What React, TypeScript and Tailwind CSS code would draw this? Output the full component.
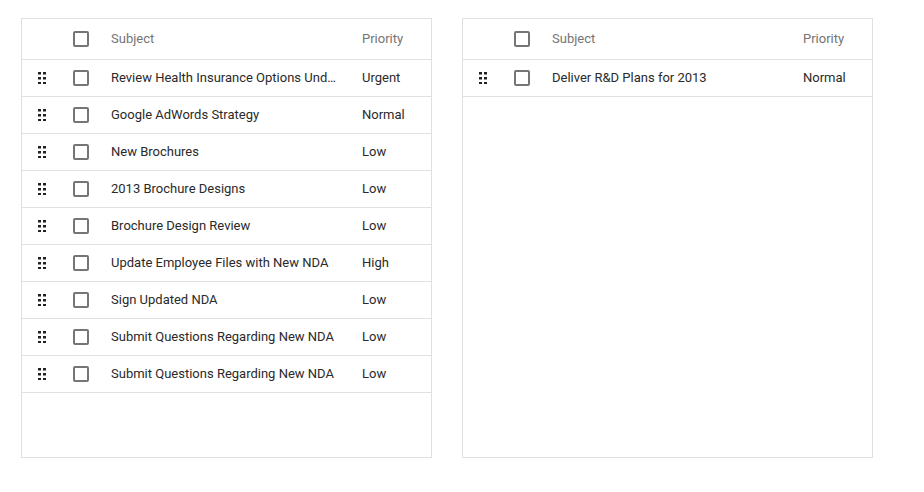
import React from 'react'

interface Task {
  subject: string
  priority: string
}

const leftTasks: Task[] = [
  { subject: 'Review Health Insurance Options Under the Affordable Care Act', priority: 'Urgent' },
  { subject: 'Google AdWords Strategy', priority: 'Normal' },
  { subject: 'New Brochures', priority: 'Low' },
  { subject: '2013 Brochure Designs', priority: 'Low' },
  { subject: 'Brochure Design Review', priority: 'Low' },
  { subject: 'Update Employee Files with New NDA', priority: 'High' },
  { subject: 'Sign Updated NDA', priority: 'Low' },
  { subject: 'Submit Questions Regarding New NDA', priority: 'Low' },
  { subject: 'Submit Questions Regarding New NDA', priority: 'Low' },
]

const rightTasks: Task[] = [{ subject: 'Deliver R&D Plans for 2013', priority: 'Normal' }]

function DragHandle() {
  return (
    <svg width="8" height="12" viewBox="0 0 8 12" className="fill-[#212121]">
      {[0, 5, 10].map((y) =>
        [0, 5].map((x) => <rect key={`${x}-${y}`} x={x} y={y} width="3" height="2.5" />),
      )}
    </svg>
  )
}

function Checkbox() {
  return <div className="size-4 rounded-[2px] border-2 border-[#757575] bg-white" />
}

function TaskGrid({ tasks }: { tasks: Task[] }) {
  return (
    <div className="flex h-[440px] w-[411px] flex-col border border-[#e0e0e0] bg-white">
      <div className="flex h-[41px] shrink-0 items-center border-b border-[#e0e0e0] text-[13px] text-[#757575]">
        <div className="w-[40px] shrink-0" />
        <div className="flex w-[38px] shrink-0 items-center pl-[11px]">
          <Checkbox />
        </div>
        <div className="min-w-0 flex-1 pl-[11px] pr-[13px]">Subject</div>
        <div className="w-[80px] shrink-0 pl-[11px]">Priority</div>
      </div>
      {tasks.map((task, i) => (
        <div
          key={i}
          className="flex h-[37px] shrink-0 items-center border-b border-[#e0e0e0] text-[13px] text-[#2a2a2a]"
        >
          <div className="flex w-[40px] shrink-0 justify-center">
            <DragHandle />
          </div>
          <div className="flex w-[38px] shrink-0 items-center pl-[11px]">
            <Checkbox />
          </div>
          <div className="min-w-0 flex-1 truncate pl-[11px] pr-[13px]">{task.subject}</div>
          <div className="w-[80px] shrink-0 pl-[11px]">{task.priority}</div>
        </div>
      ))}
    </div>
  )
}

export default function App() {
  return (
    <div className="h-[492px] w-[924px] bg-white pl-[21px] pt-[18px] font-['Roboto',sans-serif]">
      <div className="flex gap-[30px]">
        <TaskGrid tasks={leftTasks} />
        <TaskGrid tasks={rightTasks} />
      </div>
    </div>
  )
}
